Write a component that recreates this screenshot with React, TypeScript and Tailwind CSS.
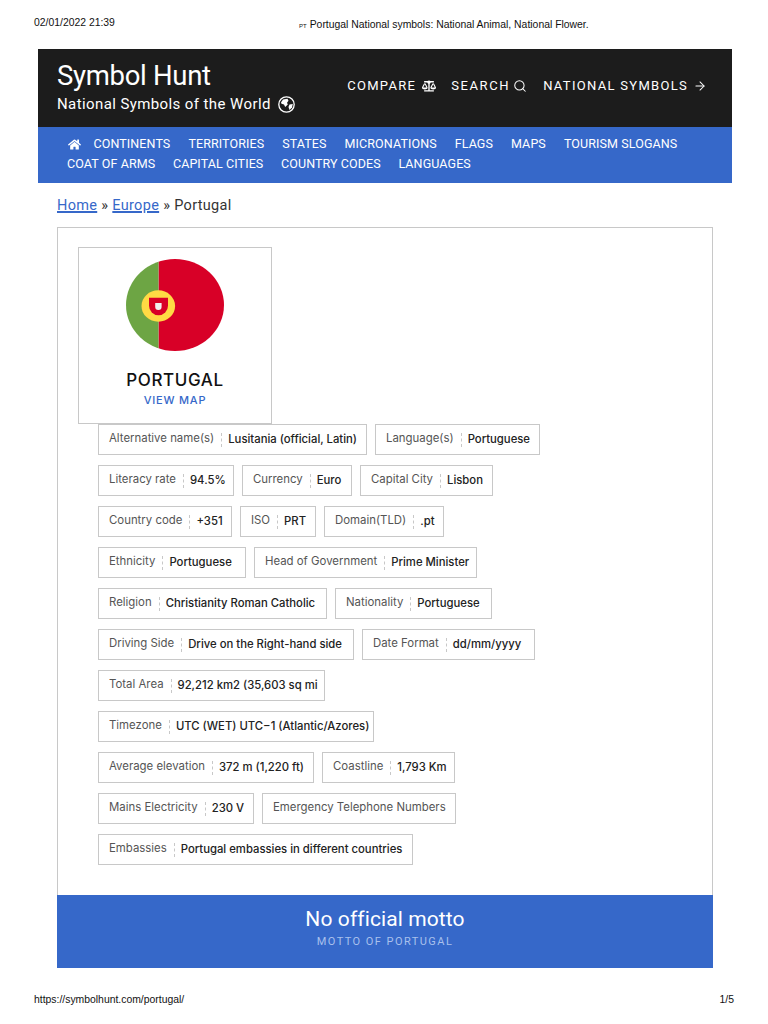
import React from "react";
import { Search, ArrowRight } from "lucide-react";
import { FaBalanceScale, FaHome } from "react-icons/fa";

type Chip = { l: string; v?: string; w: number };
const rows: Chip[][] = [
  [{ l: "Alternative name(s)", v: "Lusitania (official, Latin)", w: 269 }, { l: "Language(s)", v: "Portuguese", w: 165 }],
  [{ l: "Literacy rate", v: "94.5%", w: 136 }, { l: "Currency", v: "Euro", w: 110 }, { l: "Capital City", v: "Lisbon", w: 133 }],
  [{ l: "Country code", v: "+351", w: 134 }, { l: "ISO", v: "PRT", w: 76 }, { l: "Domain(TLD)", v: ".pt", w: 120 }],
  [{ l: "Ethnicity", v: "Portuguese", w: 148 }, { l: "Head of Government", v: "Prime Minister", w: 223 }],
  [{ l: "Religion", v: "Christianity Roman Catholic", w: 229 }, { l: "Nationality", v: "Portuguese", w: 157 }],
  [{ l: "Driving Side", v: "Drive on the Right-hand side", w: 256 }, { l: "Date Format", v: "dd/mm/yyyy", w: 173 }],
  [{ l: "Total Area", v: "92,212 km2 (35,603 sq mi", w: 227 }],
  [{ l: "Timezone", v: "UTC (WET) UTC−1 (Atlantic/Azores)", w: 276 }],
  [{ l: "Average elevation", v: "372 m (1,220 ft)", w: 216 }, { l: "Coastline", v: "1,793 Km", w: 133 }],
  [{ l: "Mains Electricity", v: "230 V", w: 156 }, { l: "Emergency Telephone Numbers", w: 194 }],
  [{ l: "Embassies", v: "Portugal embassies in different countries", w: 315 }],
];
const nav1 = ["CONTINENTS", "TERRITORIES", "STATES", "MICRONATIONS", "FLAGS", "MAPS", "TOURISM SLOGANS"];
const nav2 = ["COAT OF ARMS", "CAPITAL CITIES", "COUNTRY CODES", "LANGUAGES"];

function ChipBox({ c }: { c: Chip }) {
  return (
    <div className="h-[31px] border border-[#c8c8c8] flex items-center pl-[10px] whitespace-nowrap shrink-0" style={{ width: c.w }}>
      <span className="text-[11.4px] text-[#555] -mt-[2px]">{c.l}</span>
      {c.v && (
        <>
          <span className="h-[14px] border-l border-dashed border-[#c8c8c8] ml-[7px] mr-[6px]" />
          <span className="text-[11.3px] font-medium text-[#222]">{c.v}</span>
        </>
      )}
    </div>
  );
}

export default function App() {
  return (
    <div className="w-[768px] h-[1024px] bg-white relative overflow-hidden font-['Inter',sans-serif]">
      <div className="h-[49px] px-[34px] pt-[17px] flex font-['Liberation_Sans',sans-serif] text-[10.4px] text-[#111] leading-[12px]">
        <span className="w-[265px]">02/01/2022 21:39</span>
        <span className="pt-[2px]"><span className="text-[6px] mr-[3px]">PT</span>Portugal National symbols: National Animal, National Flower.</span>
      </div>
      <div className="mx-[38px] w-[694px] h-[78px] bg-[#1c1c1c] text-white flex pl-[19px] pr-[25px] justify-between">
        <div className="pt-[12px]">
          <div className="text-[27.5px] leading-[30px] font-normal tracking-[-0.3px] font-['Roboto',sans-serif]">Symbol Hunt</div>
          <div className="mt-[2px] text-[15px] leading-[22px] tracking-[0.4px] font-['Roboto',sans-serif] font-normal flex items-center gap-[7px]">
            National Symbols of the World
            <svg width="17" height="17" viewBox="0 0 17 17">
              <circle cx="8.5" cy="8.5" r="7.7" fill="none" stroke="white" strokeWidth="1.3" />
              <path d="M3 6.5 L5 3.5 L9.5 2.8 L10.5 4.8 L9 6.8 L9.8 8.5 L7.2 11 L6 8.5 L3.5 7.8 Z" fill="white" />
              <path d="M11.5 8.5 L14.8 8 L14 11.5 L11.5 14 L10.5 11 Z" fill="white" />
            </svg>
          </div>
        </div>
        <div className="flex items-center text-[13px] tracking-[1.3px] font-['Roboto',sans-serif] h-[74px]">
          <span>COMPARE</span>
          <FaBalanceScale size={14} className="ml-[6px] mr-[15px]" />
          <span className="tracking-[1.6px]">SEARCH</span>
          <Search size={14} strokeWidth={1.75} className="ml-[3px] mr-[16px]" />
          <span>NATIONAL SYMBOLS</span>
          <ArrowRight size={14} strokeWidth={1.75} className="ml-[5px]" />
        </div>
      </div>
      <div className="mx-[38px] w-[694px] h-[56px] bg-[#3668c9] text-white pl-[29px] pt-[7px] text-[12.5px] leading-[20px] font-['Roboto',sans-serif] tracking-[0.1px]">
        <div className="flex items-center gap-[18px]">
          <FaHome size={13} className="ml-px mr-[-5.5px]" />
          {nav1.map((n) => <span key={n}>{n}</span>)}
        </div>
        <div className="flex items-center gap-[17.6px]">
          {nav2.map((n) => <span key={n}>{n}</span>)}
        </div>
      </div>
      <div className="mx-[57px] h-[44px] pt-[1px] flex items-center text-[14.5px] text-[#333] font-['Roboto',sans-serif] tracking-[0.3px]">
        <span className="text-[#3668c9] underline decoration-[1.5px]">Home</span>
        <span className="mx-[4px]">»</span>
        <span className="text-[#3668c9] underline decoration-[1.5px]">Europe</span>
        <span className="mx-[4px]">»</span>
        <span>Portugal</span>
      </div>
      <div className="mx-[57px] w-[656px] h-[741px] border border-b-0 border-[#c8c8c8] flex flex-col">
        <div className="flex-1 pl-[20px] pt-[19px]">
          <div className="w-[194px] h-[177px] border border-[#c8c8c8] flex flex-col items-center">
            <svg width="98" height="92" viewBox="0 0 98 92" className="mt-[11px]">
              <defs><clipPath id="flagc"><ellipse cx="49" cy="46" rx="49" ry="46" /></clipPath></defs>
              <g clipPath="url(#flagc)">
                <rect x="32.5" width="66" height="92" fill="#d80027" />
                <rect width="32.5" height="92" fill="#6da544" />
              </g>
              <ellipse cx="32.3" cy="47" rx="16.8" ry="15.7" fill="#ffda44" />
              <path d="M23 38.7 h19 v8 a9.5 9.5 0 0 1 -19 0 z" fill="#d80027" />
              <path d="M29.2 44 h6.4 v3.8 a3.2 3.2 0 0 1 -6.4 0 z" fill="#f0f0f0" />
            </svg>
            <div className="mt-[17px] text-[17px] leading-[24px] font-medium tracking-[0.6px] text-[#111]">PORTUGAL</div>
            <div className="text-[11px] leading-[16px] font-medium tracking-[0.8px] text-[#3668c9]">VIEW MAP</div>
          </div>
          <div className="ml-[20px] flex flex-col gap-[10px]">
            {rows.map((r, i) => (
              <div key={i} className="flex gap-2">
                {r.map((c) => <ChipBox key={c.l} c={c} />)}
              </div>
            ))}
          </div>
        </div>
        <div className="-mx-px h-[73px] bg-[#3668c9] flex flex-col items-center pt-[11px] font-['Roboto',sans-serif]">
          <div className="text-[21px] leading-[27px] text-white font-normal tracking-[0.1px]">No official motto</div>
          <div className="mt-[1px] text-[11px] leading-[16px] tracking-[1.45px] text-[#a9c0ec]">MOTTO OF PORTUGAL</div>
        </div>
      </div>
      <div className="absolute left-[34px] right-[34px] top-[994px] flex justify-between font-['Liberation_Sans',sans-serif] text-[10.4px] leading-[12px] text-[#111]">
        <span>https://symbolhunt.com/portugal/</span>
        <span>1/5</span>
      </div>
    </div>
  );
}
